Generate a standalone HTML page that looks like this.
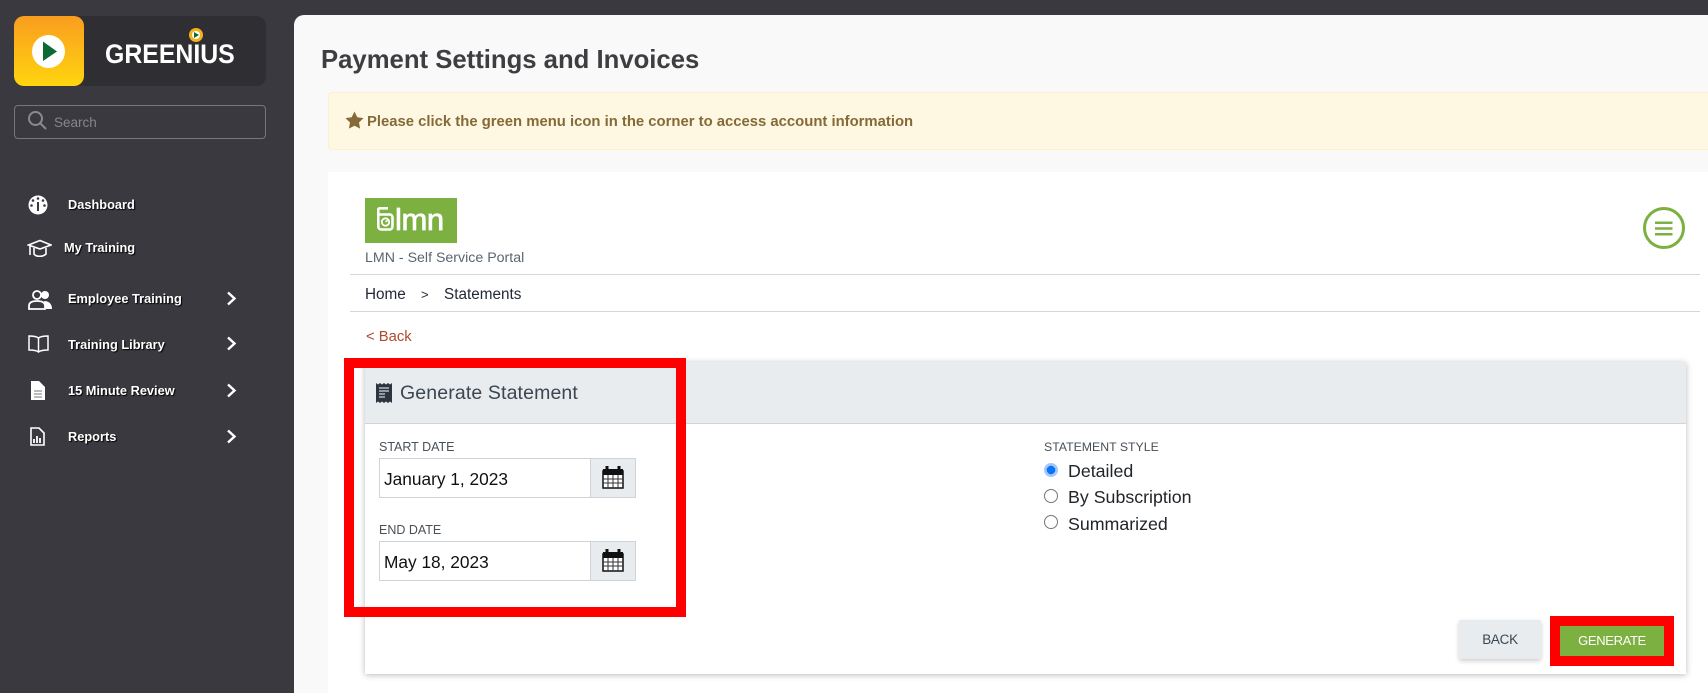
<!DOCTYPE html>
<html><head><meta charset="utf-8"><style>
html,body{margin:0;padding:0;width:1708px;height:693px;overflow:hidden;background:#3a3940;font-family:"Liberation Sans",sans-serif}
.a{position:absolute;white-space:nowrap}
.nav{position:absolute;color:#fff;font-weight:700;font-size:12.800px;text-shadow:1px 1px 1px #000;white-space:nowrap;line-height:16px}
.ch{position:absolute;left:226px}
.t{position:absolute;white-space:nowrap;font-family:"Liberation Sans",sans-serif}
.lab{font-size:12.500px;color:#495057;line-height:16px}
.inp{position:absolute;left:379px;width:256px;height:40px;border:1px solid #ced4da;background:#fff;box-sizing:border-box}
.add{position:absolute;left:590px;width:46px;height:40px;border:1px solid #ced4da;background:#e9ecef;box-sizing:border-box}
.val{font-size:17.300px;color:#111;line-height:22px}
.rt{font-size:17.800px;color:#212529;line-height:22px}
.rb{position:absolute;left:1044px;width:14px;height:14px;border:1px solid #767676;border-radius:50%;box-sizing:border-box;background:#fff}
</style></head><body>
<!-- logo -->
<div class="a" style="left:14px;top:16px;width:252px;height:70px;background:#2f2e33;border-radius:10px"></div>
<div class="a" style="left:14px;top:16px;width:70px;height:70px;border-radius:10px;background:linear-gradient(#f99d1f,#ffd50f)"></div>
<div class="a" style="left:32px;top:35px;width:33px;height:33px;border-radius:50%;background:#fff"></div>
<svg class="a" style="left:32px;top:35px" width="33" height="33"><path d="M11 6.500L25 16.500L11 26Z" fill="#0d6a35"/></svg>
<div class="a" style="left:105px;top:39px;color:#fff;font-weight:700;font-size:27px;line-height:30px;transform:scaleX(.92);transform-origin:0 0">GREENIUS</div>
<div class="a" style="left:189px;top:28px;width:14px;height:14px;border-radius:50%;background:#f3b11c"></div>
<div class="a" style="left:192px;top:31px;width:8px;height:8px;border-radius:50%;background:#fff"></div>
<svg class="a" style="left:192px;top:31px" width="8" height="8"><path d="M2 1L7 4L2 7Z" fill="#0d6a35"/></svg>
<!-- search -->
<div class="a" style="left:14px;top:105px;width:252px;height:34px;border:1px solid #77767b;border-radius:4px;box-sizing:border-box"></div>
<svg class="a" style="left:27px;top:110px" width="20" height="20" fill="none" stroke="#8a898e" stroke-width="2"><circle cx="8.500" cy="8.500" r="6.500"/><path d="M13.500 13.500L19 19"/></svg>
<div class="a" style="left:54px;top:115px;font-size:13.500px;color:#87868b;line-height:16px">Search</div>
<!-- nav -->
<svg class="a" style="left:28px;top:195px" width="20" height="20"><circle cx="10" cy="10" r="9.500" fill="#fff"/><circle cx="10" cy="3.500" r="1.300" fill="#3a3940"/><circle cx="5" cy="5.500" r="1.300" fill="#3a3940"/><circle cx="15" cy="5.500" r="1.300" fill="#3a3940"/><circle cx="3.500" cy="10.500" r="1.300" fill="#3a3940"/><circle cx="16.500" cy="10.500" r="1.300" fill="#3a3940"/><path d="M10 7V16" stroke="#3a3940" stroke-width="2"/></svg>
<div class="nav" style="left:68px;top:197px">Dashboard</div>
<svg class="a" style="left:27px;top:239px" width="25" height="20" fill="none" stroke="#fff" stroke-width="1.600"><path d="M1.500 6L13 1.500L24 6L13 10Z"/><path d="M7 9V15C9 18 16 18 19 15V9"/><path d="M3 7V16"/></svg>
<div class="nav" style="left:64px;top:240px">My Training</div>
<svg class="a" style="left:27px;top:289px" width="26" height="22" fill="none"><circle cx="10" cy="6" r="4" stroke="#fff" stroke-width="1.800"/><circle cx="18" cy="6" r="4" fill="#fff"/><path d="M2 20V17C2 13 6 12 10 12C14 12 18 13 18 17V20Z" stroke="#fff" stroke-width="1.800"/><path d="M17 12C21 12 25 14 25 20H19" fill="#fff"/></svg>
<div class="nav" style="left:68px;top:291px">Employee Training</div>
<svg class="a" style="left:28px;top:335px" width="21" height="18" fill="none" stroke="#fff" stroke-width="1.500"><path d="M10.500 3C8 1 4 1 1 1V15C4 15 8 15 10.500 17C13 15 17 15 20 15V1C17 1 13 1 10.500 3V17"/></svg>
<div class="nav" style="left:68px;top:337px">Training Library</div>
<svg class="a" style="left:30px;top:381px" width="15" height="19"><path d="M1 0H9L15 6V19H1Z" fill="#fff"/><path d="M4 10H12M4 13H12M4 16H12" stroke="#77767b" stroke-width="1"/></svg>
<div class="nav" style="left:68px;top:383px">15 Minute Review</div>
<svg class="a" style="left:30px;top:427px" width="15" height="19" fill="none"><path d="M1 1H9L14 6V18H1Z" stroke="#fff" stroke-width="1.600"/><path d="M4 16V12M7 16V9M10 16V11" stroke="#fff" stroke-width="1.800"/></svg>
<div class="nav" style="left:68px;top:429px">Reports</div>
<svg class="ch" style="top:291px" width="11" height="15" fill="none" stroke="#fff" stroke-width="2.400"><path d="M2 1.500L8.500 7.500L2 13.500"/></svg>
<svg class="ch" style="top:336px" width="11" height="15" fill="none" stroke="#fff" stroke-width="2.400"><path d="M2 1.500L8.500 7.500L2 13.500"/></svg>
<svg class="ch" style="top:383px" width="11" height="15" fill="none" stroke="#fff" stroke-width="2.400"><path d="M2 1.500L8.500 7.500L2 13.500"/></svg>
<svg class="ch" style="top:429px" width="11" height="15" fill="none" stroke="#fff" stroke-width="2.400"><path d="M2 1.500L8.500 7.500L2 13.500"/></svg>
<!-- main -->
<div class="a" style="left:294px;top:15px;width:1414px;height:678px;background:#f9f9f9;border-radius:10px 0 0 0"></div>
<div class="a" style="left:321px;top:44px;font-size:25.700px;font-weight:700;color:#3e3e42;line-height:32px">Payment Settings and Invoices</div>
<div class="a" style="left:328px;top:92px;width:1380px;height:58px;background:#fef7e2;border:1px solid #fdefd0;border-right:0;border-radius:4px 0 0 4px;box-sizing:border-box"></div>
<svg class="a" style="left:345px;top:111px" width="19" height="18"><path d="M9.500 0.500L12.300 6.200L18.500 7.100L14 11.500L15.100 17.600L9.500 14.700L3.900 17.600L5 11.500L0.500 7.100L6.700 6.200Z" fill="#856a37"/></svg>
<div class="a" style="left:367px;top:113px;font-size:14.850px;font-weight:700;color:#856a37;line-height:18px">Please click the green menu icon in the corner to access account information</div>
<!-- white -->
<div class="a" style="left:328px;top:172px;width:1380px;height:521px;background:#fff"></div>
<div class="a" style="left:365px;top:198px;width:92px;height:45px;background:#7cb041"></div>
<svg class="a" style="left:376px;top:206px" width="20" height="26" fill="none" stroke="#fff"><path d="M2.300 2.300H12M2.300 2.300V20.500A3 3 0 0 0 5 23.500H13A3 3 0 0 0 16.500 20.500V11.500A3 3 0 0 0 13 8.500H2.300" stroke-width="2.600"/><circle cx="9.500" cy="16" r="3.700" stroke-width="1.800"/><path d="M9.500 16L12.500 13.500" stroke-width="1.500"/></svg>
<div class="a" style="left:395px;top:204px;color:#fff;font-weight:400;font-size:31px;line-height:32px;letter-spacing:-.4px;-webkit-text-stroke:.8px #fff">lmn</div>
<div class="t" style="left:365px;top:249px;font-size:14.200px;color:#5a6672;line-height:18px">LMN - Self Service Portal</div>
<svg class="a" style="left:1642px;top:206px" width="44" height="44" fill="none" stroke="#7cb041"><circle cx="22" cy="22" r="19.500" stroke-width="3"/><path d="M13 16.700H30.500M13 22.500H30.500M13 28.300H30.500" stroke-width="2.500"/></svg>
<div class="a" style="left:350px;top:274px;width:1350px;height:1px;background:#d2d8de"></div>
<div class="a" style="left:350px;top:311px;width:1350px;height:1px;background:#d2d8de"></div>
<div class="t" style="left:365px;top:286px;font-size:15.300px;color:#212a35;line-height:18px">Home</div>
<div class="t" style="left:421px;top:286px;font-size:13px;color:#212a35;line-height:18px">&gt;</div>
<div class="t" style="left:444px;top:286px;font-size:15.300px;color:#212a35;line-height:18px">Statements</div>
<div class="t" style="left:366px;top:328px;font-size:14.800px;color:#b04a2e;line-height:18px">&lt; Back</div>
<!-- card -->
<div class="a" style="left:365px;top:362px;width:1321px;height:312px;background:#fff;box-shadow:0 1px 6px rgba(0,0,0,.28)"></div>
<div class="a" style="left:365px;top:362px;width:1321px;height:62px;background:#e9ecef;border-bottom:1px solid #d2d5d8;box-sizing:border-box"></div>
<svg class="a" style="left:376px;top:383px" width="16" height="20"><path d="M0 0L2 1.500L4 0L6 1.500L8 0L10 1.500L12 0L14 1.500L16 0V20L14 18.500L12 20L10 18.500L8 20L6 18.500L4 20L2 18.500L0 20Z" fill="#2b3640"/><path d="M3 5H13M3 8H13M3 11H9M3 14H9" stroke="#fff" stroke-width="1"/></svg>
<div class="t" style="left:400px;top:381px;font-size:19.500px;color:#3a4650;line-height:24px;letter-spacing:.13px">Generate Statement</div>
<div class="t lab" style="left:379px;top:439px">START DATE</div>
<div class="inp" style="top:458px"></div><div class="add" style="top:458px"></div>
<div class="t val" style="left:384px;top:468px">January 1, 2023</div>
<div class="t lab" style="left:379px;top:522px">END DATE</div>
<div class="inp" style="top:541px"></div><div class="add" style="top:541px"></div>
<div class="t val" style="left:384px;top:551px">May 18, 2023</div>
<svg class="a" style="left:602px;top:466px" width="22" height="23"><path d="M1 5H21V22H1Z" fill="#fff" stroke="#111" stroke-width="1.500"/><path d="M1 3H21V9H1Z" fill="#111"/><path d="M5 0V5M17 0V5" stroke="#111" stroke-width="3"/><path d="M1 13H21M1 17H21M6 9V22M11 9V22M16 9V22" stroke="#333" stroke-width="1"/></svg>
<svg class="a" style="left:602px;top:549px" width="22" height="23"><path d="M1 5H21V22H1Z" fill="#fff" stroke="#111" stroke-width="1.500"/><path d="M1 3H21V9H1Z" fill="#111"/><path d="M5 0V5M17 0V5" stroke="#111" stroke-width="3"/><path d="M1 13H21M1 17H21M6 9V22M11 9V22M16 9V22" stroke="#333" stroke-width="1"/></svg>
<div class="t lab" style="left:1044px;top:439px;font-size:12.300px">STATEMENT STYLE</div>
<div class="rb" style="top:463px;border:2px solid #a5c8f8;background:#0a75f8;box-shadow:inset 0 0 0 .5px #fff"></div>
<div class="rb" style="top:489px"></div>
<div class="rb" style="top:515px"></div>
<div class="t rt" style="left:1068px;top:460px">Detailed</div>
<div class="t rt" style="left:1068px;top:486px">By Subscription</div>
<div class="t rt" style="left:1068px;top:513px">Summarized</div>
<div class="a" style="left:1459px;top:620px;width:82px;height:39px;background:#e9ecef;box-shadow:0 2px 5px rgba(0,0,0,.2);border-radius:2px;text-align:center;font-size:13.500px;letter-spacing:-.3px;line-height:39px;color:#3a4650">BACK</div>
<div class="a" style="left:1550px;top:616px;width:104px;height:30px;background:#7cb041;border:10px solid #f00;text-align:center;font-size:13px;letter-spacing:-.35px;line-height:30px;color:#fff">GENERATE</div>
<!-- red rect -->
<div class="a" style="left:344px;top:358px;width:342px;height:259px;border:10px solid #f00;box-sizing:border-box"></div>
</body></html>
